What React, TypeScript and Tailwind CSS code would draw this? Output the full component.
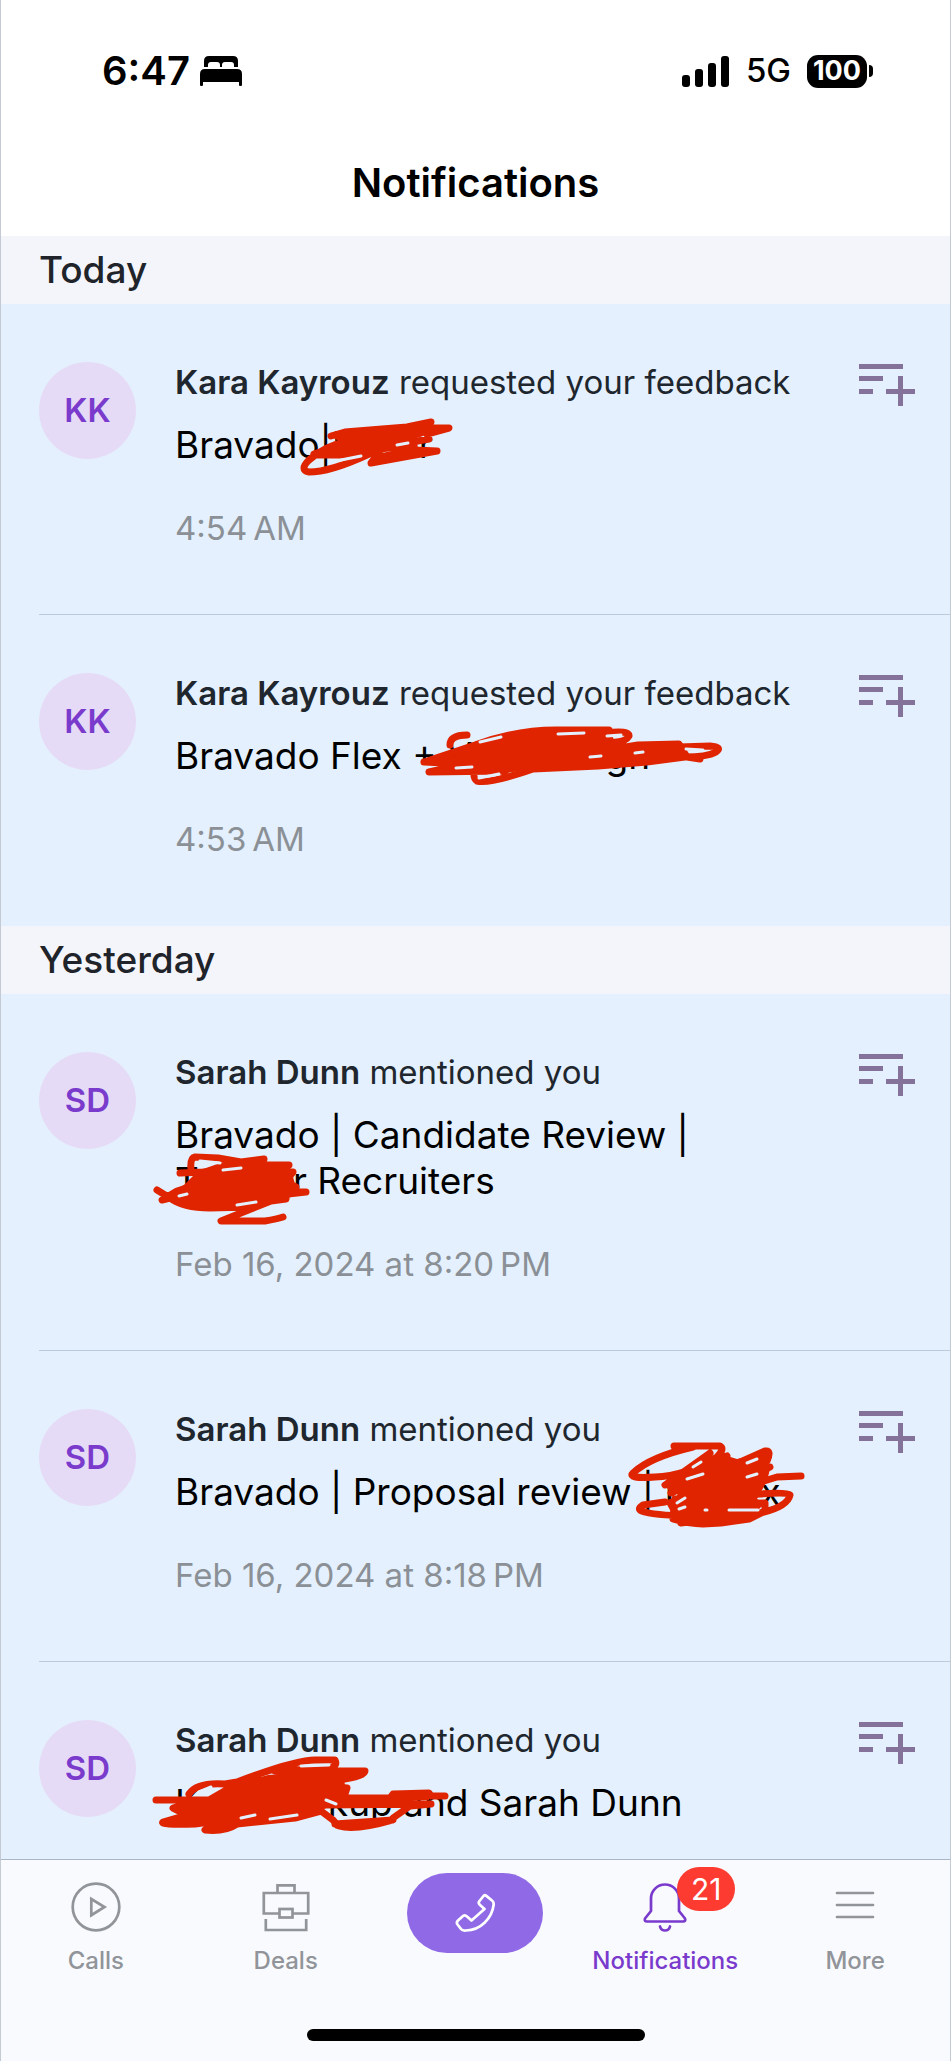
import type { ReactNode } from "react";

type Mark = {
  fill: string;
  lines: string;
  gaps?: string;
};

type Notification = {
  id: number;
  initials: string;
  name: string;
  action: string;
  subject: ReactNode;
  mark: Mark;
  time?: string;
};

type Section = {
  title: string;
  items: Notification[];
};

const sections: Section[] = [
  {
    title: "Today",
    items: [
      {
        id: 1,
        initials: "KK",
        name: "Kara Kayrouz",
        action: "requested your feedback",
        subject: <>Bravado|K<span className="inline-block w-[62px]" />r</>,
        mark: {
          fill: "M156 14 L168 11 L202 6 L232 5 L256 2 L258 6 L270 7 L254 12 L236 18 L238 28 L192 31 L172 34 L145 32 L168 22Z",
          lines: "M156 14 L170 10 L232 5 L256 0 L252 6 L274 6 L252 12 L254 17 L215 24 L192 33 Q155 50 134 50 Q124 48 134 38 Q150 24 170 20 M139 32 L168 22 M139 33 L172 33 L238 19 L240 28 L262 29 L196 41 L200 36 L240 28",
          gaps: "M166 38 L186 34 M222 23 L233 21",
        },
        time: "4:54\u2009AM",
      },
      {
        id: 2,
        initials: "KK",
        name: "Kara Kayrouz",
        action: "requested your feedback",
        subject: <>Bravado Flex + V<span className="inline-block w-[124px]" />ign</>,
        mark: {
          fill: "M280 22 L300 12 L331 4 L381 -3 L436 -3 L440 12 L463 13 L505 12 L513 24 L472 29 L423 33 L358 36 L319 42 L298 38 L262 37 L283 31 L256 28Z",
          lines: "M292 2 Q275 2 275 12 M249 29 L300 12 Q340 -3 381 -3 L434 -3 L430 0 Q455 -3 454 3 Q450 10 436 9 M438 16 L463 12 L504 11 L512 24 L525 26 M504 14 L535 13 Q548 14 541 19 Q532 24 510 24 L472 29 L423 33 L358 36 Q315 51 302 48 Q298 46 299 36 M249 29 L290 31 L254 39 L330 38",
          gaps: "M305 9 L326 4 M383 1 L409 0 M432 3 L446 2 M415 24 L426 23 M281 35 L297 34 M304 45 L324 41 M460 20 L468 19 M511 16 L528 17",
        },
        time: "4:53\u2009AM",
      },
    ],
  },
  {
    title: "Yesterday",
    items: [
      {
        id: 3,
        initials: "SD",
        name: "Sarah Dunn",
        action: "mentioned you",
        subject: <>Bravado | Candidate Review | <span className="whitespace-nowrap">T<span className="inline-block w-[94px]" />r</span> Recruiters</>,
        mark: {
          fill: "M5 61 L32 56 L51 53 L113 54 L117 61 L121 76 L128 81 L110 87 L96 91 L74 95 L32 95 L5 90 L-12 87 L2 78 L10 72 L18 64Z",
          lines: "M89 47 L66 50 L43 46 L20 45 Q15 46 16 57 M5 61 L30 60 L50 53 L114 53 L70 58 L118 60 L110 70 L121 75 L90 80 L131 80 L95 84 L111 87 L96 89 L46 109 L90 109 Q102 107 108 105 M-18 78 L-5 86 L-13 88 L2 79 L30 70 M-5 86 Q8 96 35 96 L74 95",
          gaps: "M25 49 L45 51 M48 58 L66 56 M4 84 L12 82 M62 93 L81 90",
        },
        time: "Feb 16, 2024 at 8:20\u2009PM",
      },
      {
        id: 4,
        initials: "SD",
        name: "Sarah Dunn",
        action: "mentioned you",
        subject: <>Bravado | Proposal review | <span className="whitespace-nowrap">R<span className="inline-block w-[72px]" />x</span></>,
        mark: {
          fill: "M490 16 L508 6 L540 -10 L552 -13 L562 -10 L592 -17 L590 -6 L595 0 L592 12 L582 30 L590 34 L578 46 L546 52 L528 54 L500 50 L490 32 L505 26 L494 22Z",
          lines: "M499 -23 L545 -23 Q550 -20 542 -12 Q510 7 480 8 Q452 10 458 4 Q475 -12 518 -22 M535 -16 L490 16 L552 -13 L496 24 L590 -18 Q597 -19 592 -8 L505 28 L595 -2 L510 36 L602 8 L626 7 M490 33 L468 36 Q460 41 470 43 Q490 49 575 46 M575 46 Q612 40 615 26 Q612 23 585 25 L500 30 L498 50 Q510 54 528 55 L546 54 L574 50 L590 42 L590 34 L500 36 M512 36 L506 54 L548 48",
          gaps: "M512 10 L528 5 M518 -2 L526 -7 M572 -6 L582 -10 M554 41 L583 41 M530 41 L532 41 M504 40 L510 38 M572 8 L582 5 M502 34 L510 29",
        },
        time: "Feb 16, 2024 at 8:18\u2009PM",
      },
      {
        id: 5,
        initials: "SD",
        name: "Sarah Dunn",
        action: "mentioned you",
        subject: <>K<span className="inline-block w-[128px]" />kup and Sarah Dunn</>,
        mark: {
          fill: "M34 18 L51 7 L93 -5 L146 -9 L190 -8 L169 1 L171 8 L171 16 L219 16 L254 14 L254 20 L204 23 L156 25 L146 31 L120 37 L85 43 L43 49 L30 47 L20 41 L-8 42 L10 35 L0 28 L24 22Z",
          lines: "M14 14 Q22 2 50 4 L62 2 Q120 -20 140 -20 L160 -20 Q163 -14 155 -12 L100 -9 M-19 20 L34 20 L60 5 L146 -9 L190 -9 Q190 -4 165 0 L150 6 L172 8 L170 14 M-19 20 L0 20 M10 34 L-2 28 L24 20 M12 35 L-12 42 Q-16 45 20 44 L50 40 L30 50 Q50 52 62 44 L120 38 L146 31 L158 40 L162 45 M160 18 L215 18 L218 14 L254 13 L256 16 L270 16 M148 25 L256 24 L235 26 L218 38 M160 44 L218 40 Q180 51 164 46",
          gaps: "M24 12 L36 7 M126 -14 L154 -15 M66 38 L80 35 M95 39 L122 35 M151 20 L161 24",
        },
      },
    ],
  },
];

const RedMark = ({ mark }: { mark: Mark }) => (
  <svg
    className="absolute left-0 top-0 h-px w-px overflow-visible pointer-events-none"
    fill="none"
    strokeLinecap="round"
    strokeLinejoin="round"
    aria-hidden="true"
  >
    <path d={mark.fill} fill="#e02400" />
    <path d={mark.lines} stroke="#e02400" strokeWidth="7" />
    <path d={mark.gaps} stroke="#e4f0fd" strokeWidth="3" />
  </svg>
);

const BedIcon = () => (
  <svg width="42" height="30" viewBox="0 0 42 30" aria-hidden="true">
    <path d="M4 11V5Q4 0 9 0H33Q38 0 38 5V11H34V9Q34 6 31 6H25Q22 6 22 9V11H20V9Q20 6 17 6H11Q8 6 8 9V11Z" />
    <path d="M0 18Q0 13 5 13H37Q42 13 42 18V29Q42 30 41 30H40Q39 30 39 29V26H3V29Q3 30 2 30H1Q0 30 0 29Z" />
  </svg>
);

const SignalIcon = () => (
  <svg width="48" height="31" viewBox="0 0 48 31" aria-hidden="true">
    <rect x="0" y="19" width="8" height="12" rx="3" />
    <rect x="13" y="13" width="8" height="18" rx="3" />
    <rect x="26" y="7" width="8" height="24" rx="3" />
    <rect x="39" y="0" width="8" height="31" rx="3" />
  </svg>
);

const AddToListIcon = () => (
  <svg width="56" height="42" viewBox="0 0 56 42" fill="#84729b" aria-hidden="true">
    <path d="M0 0H44V5H0ZM0 12H24V17H0ZM0 25H14V30H0ZM27 25H39V12H44V25H56V30H44V42H39V30H27Z" />
  </svg>
);

const CallsIcon = () => (
  <svg width="50" height="50" viewBox="0 0 50 50" fill="none" stroke="currentColor" strokeWidth="2.7" aria-hidden="true">
    <circle cx="25" cy="25" r="23.3" />
    <path d="M20.3 17V33.2L33.5 25Z" />
  </svg>
);

const DealsIcon = () => (
  <svg width="50" height="50" viewBox="0 0 50 50" fill="none" stroke="currentColor" strokeWidth="2.7" aria-hidden="true">
    <path d="M16.5 11V3.3H33.5V11" />
    <path d="M18 31.5H2.8V11H47.2V31.5H32" />
    <rect x="18.5" y="27" width="13" height="8.5" />
    <path d="M4.8 37V48H45.2V37" />
  </svg>
);

const BellIcon = () => (
  <svg width="50" height="50" viewBox="0 0 50 50" fill="none" stroke="currentColor" strokeWidth="2.7" strokeLinecap="round" strokeLinejoin="round" aria-hidden="true">
    <path d="M11 29V16.5A14 14 0 0 1 39 16.5V29L45 36.5Q46 39.5 43 39.5H7Q4 39.5 5 36.5Z" />
    <path d="M20 44.5Q21 48.5 25 48.5T30 44.5" />
  </svg>
);

const MoreIcon = () => (
  <svg width="50" height="50" viewBox="0 0 50 50" fill="none" stroke="currentColor" strokeWidth="2.7" strokeLinecap="round" aria-hidden="true">
    <path d="M7 11H43M7 23H43M7 35H43" />
  </svg>
);

const PhoneIcon = () => (
  <svg width="40" height="40" viewBox="0 0 40 40" fill="none" stroke="currentColor" strokeWidth="2.7" strokeLinejoin="round" aria-hidden="true">
    <path d="M31 2.6L37 7.5Q39 9 38.6 12C37 25 26 37 11 37.5Q7.5 38 6 36L2.5 31.5Q1 29.5 3 27.5L8 23Q10 21.5 12 23.5L16.5 27.5L29.5 16L24.5 11.5Q23 9.7 24.5 8L28.5 3Q29.8 1.7 31 2.6Z" />
  </svg>
);

const Row = ({ item }: { item: Notification }) => (
  <li className="ml-[38px] flex items-start gap-[39px] border-b border-[#bccbdb] pb-16 pr-[35px] pt-14 last:border-transparent">
    <div className="mt-0.5 flex h-[97px] w-[97px] shrink-0 items-center justify-center rounded-full bg-[#e6dbf6] text-[33px] font-semibold text-[#7a3bcd]">
      {item.initials}
    </div>
    <div className="min-w-0 flex-1">
      <p className="text-[33px] leading-[44px] text-[#20262d]">
        <strong className="font-semibold">{item.name}</strong> {item.action}
      </p>
      <div className="relative mt-[18px]">
        <p className="text-[37px] leading-[46px] text-black">{item.subject}</p>
        <RedMark mark={item.mark} />
      </div>
      {item.time && (
        <p className="mt-[38px] text-[33px] leading-[44px] text-[#8b9096]">{item.time}</p>
      )}
    </div>
    <button type="button" aria-label="Add to list" className="ml-5 mt-1 shrink-0">
      <AddToListIcon />
    </button>
  </li>
);

const tabClass = "flex flex-1 flex-col items-center gap-[13px] pt-[22px] text-[24px] leading-8 font-medium";

export default function App() {
  return (
    <div className="flex h-screen flex-col overflow-hidden border-x border-[#c3cad4] bg-white font-['Inter',sans-serif]">
      <header className="shrink-0">
        <div className="flex h-[142px] items-center justify-between pl-[101px] pr-[77px]">
          <div className="flex items-center gap-2.5">
            <span className="text-[40px] font-semibold">6:47</span>
            <BedIcon />
          </div>
          <div className="flex items-center">
            <SignalIcon />
            <span className="ml-4 text-[33px] font-medium">5G</span>
            <span className="ml-4 flex h-[33px] w-[60px] items-center justify-center rounded-[11px] bg-black text-[27px] font-bold text-white">
              100
            </span>
            <span className="ml-0.5 h-3 w-1 rounded-r-full bg-black" />
          </div>
        </div>
        <h1 className="flex h-[94px] items-center justify-center pb-3 text-[40px] font-semibold text-black">
          Notifications
        </h1>
      </header>

      <main className="min-h-0 flex-1 overflow-hidden">
        {sections.map((section) => (
          <section key={section.title}>
            <h2 className="flex h-[68px] items-center bg-[#f4f5fa] px-[38px] text-[37px] font-medium text-[#20242a]">
              {section.title}
            </h2>
            <ul className="bg-[#e4f0fd]">
              {section.items.map((item) => (
                <Row key={item.id} item={item} />
              ))}
            </ul>
          </section>
        ))}
      </main>

      <footer className="shrink-0 border-t border-[#a9b6c8] bg-[#f9fafe]">
        <nav className="flex text-[#919499]">
          <a href="#calls" className={tabClass}>
            <CallsIcon />
            Calls
          </a>
          <a href="#deals" className={tabClass}>
            <DealsIcon />
            Deals
          </a>
          <div className="flex flex-1 justify-center pt-[13px]">
            <button
              type="button"
              aria-label="Start a call"
              className="flex h-20 w-[136px] items-center justify-center rounded-full bg-[#9069e6] text-white"
            >
              <PhoneIcon />
            </button>
          </div>
          <a href="#notifications" aria-current="page" className={`${tabClass} text-[#7a3bcd]`}>
            <span className="relative">
              <BellIcon />
              <span className="absolute -top-[15px] left-[37px] flex h-11 w-[58px] items-center justify-center rounded-full bg-[#fe3b30] text-[30px] font-normal text-white">
                21
              </span>
            </span>
            Notifications
          </a>
          <a href="#more" className={tabClass}>
            <MoreIcon />
            More
          </a>
        </nav>
        <div className="mx-auto mb-5 mt-[52px] h-3 w-[338px] rounded-full bg-black" />
      </footer>
    </div>
  );
}
